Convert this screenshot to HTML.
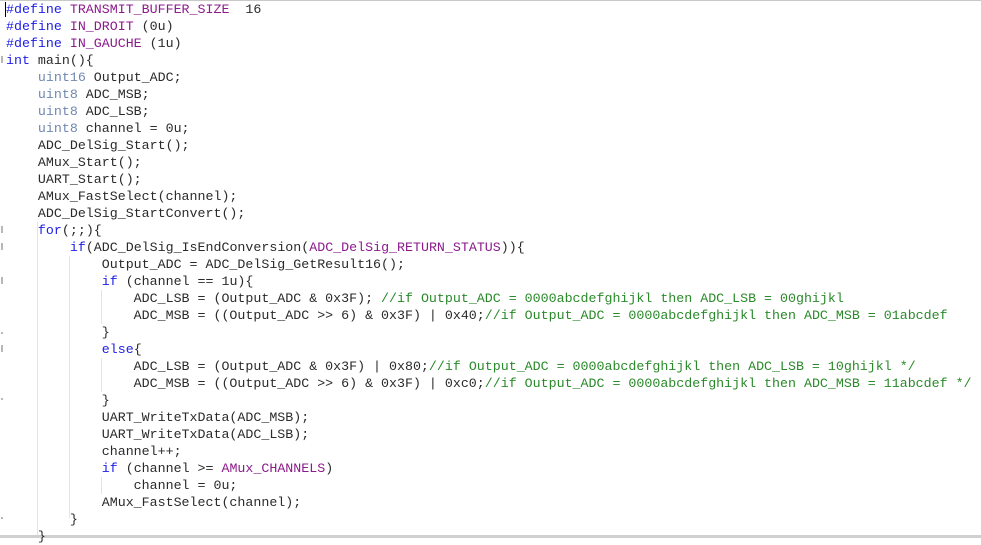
<!DOCTYPE html>
<html><head><meta charset="utf-8"><style>
html,body{margin:0;padding:0;background:#fff;}
body{width:981px;height:538px;overflow:hidden;position:relative;}
.c{position:absolute;left:6px;top:1px;font-family:"Liberation Mono","Courier New",monospace;font-size:13.3px;line-height:17px;color:#2a2a2a;white-space:pre;}
.k{color:#2020e8}.t{color:#7088b0}.m{color:#8b1a8b}.g{color:#2a8a2a}.p{color:#2020e8}
.gl{position:absolute;width:1px;background:#e4e4e4;}
.mk{position:absolute;left:1px;width:2px;height:7px;background:#b8b8b8;}
</style></head><body>
<div style="position:absolute;left:0;top:0;width:981px;height:1px;background:#c8c8c8"></div>
<div style="position:absolute;left:0;top:535px;width:981px;height:3px;background:#d0d0d0"></div>
<div style="position:absolute;left:5px;top:2px;width:1px;height:15px;background:#000"></div>
<div class="gl" style="left:37px;top:222px;height:313px"></div>
<div class="gl" style="left:69px;top:256px;height:262px"></div>
<div class="gl" style="left:101px;top:290px;height:34px"></div>
<div class="gl" style="left:101px;top:358px;height:34px"></div>
<div class="gl" style="left:101px;top:477px;height:17px"></div>
<div class="mk" style="top:56px"></div>
<div class="mk" style="top:226px"></div>
<div class="mk" style="top:243px"></div>
<div class="mk" style="top:277px"></div>
<div class="mk" style="top:345px"></div>
<div class="mk" style="top:398px;height:2px"></div>
<div class="mk" style="top:332px;height:2px"></div>
<div class="mk" style="top:517px;height:2px"></div>
<div class="c"><span class="p">#define</span> <span class="m">TRANSMIT_BUFFER_SIZE</span>  16
<span class="p">#define</span> <span class="m">IN_DROIT</span> (0u)
<span class="p">#define</span> <span class="m">IN_GAUCHE</span> (1u)
<span class="k">int</span> main(){
    <span class="t">uint16</span> Output_ADC;
    <span class="t">uint8</span> ADC_MSB;
    <span class="t">uint8</span> ADC_LSB;
    <span class="t">uint8</span> channel = 0u;
    ADC_DelSig_Start();
    AMux_Start();
    UART_Start();
    AMux_FastSelect(channel);
    ADC_DelSig_StartConvert();
    <span class="k">for</span>(;;){
        <span class="k">if</span>(ADC_DelSig_IsEndConversion(<span class="m">ADC_DelSig_RETURN_STATUS</span>)){
            Output_ADC = ADC_DelSig_GetResult16();
            <span class="k">if</span> (channel == 1u){
                ADC_LSB = (Output_ADC &amp; 0x3F); <span class="g">//if Output_ADC = 0000abcdefghijkl then ADC_LSB = 00ghijkl</span>
                ADC_MSB = ((Output_ADC &gt;&gt; 6) &amp; 0x3F) | 0x40;<span class="g">//if Output_ADC = 0000abcdefghijkl then ADC_MSB = 01abcdef</span>
            }
            <span class="k">else</span>{
                ADC_LSB = (Output_ADC &amp; 0x3F) | 0x80;<span class="g">//if Output_ADC = 0000abcdefghijkl then ADC_LSB = 10ghijkl */</span>
                ADC_MSB = ((Output_ADC &gt;&gt; 6) &amp; 0x3F) | 0xc0;<span class="g">//if Output_ADC = 0000abcdefghijkl then ADC_MSB = 11abcdef */</span>
            }
            UART_WriteTxData(ADC_MSB);
            UART_WriteTxData(ADC_LSB);
            channel++;
            <span class="k">if</span> (channel &gt;= <span class="m">AMux_CHANNELS</span>)
                channel = 0u;
            AMux_FastSelect(channel);
        }
    }
</div>
</body></html>
